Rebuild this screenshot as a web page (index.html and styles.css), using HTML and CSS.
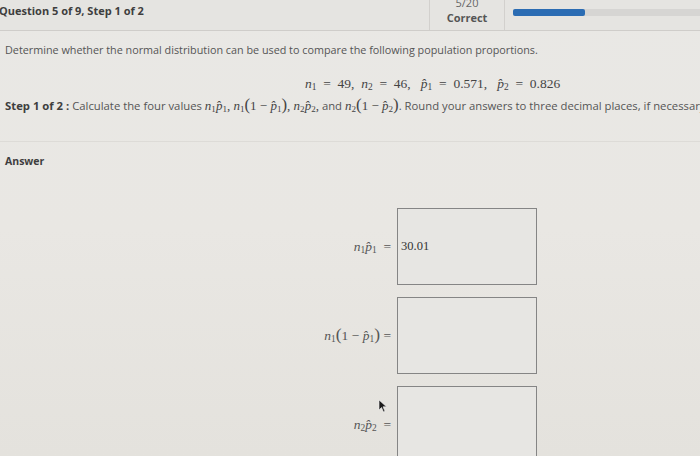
FILE: index.html
```html
<!DOCTYPE html>
<html>
<head>
<meta charset="utf-8">
<link rel="stylesheet" href="styles.css">
</head>
<body>
<div class="page">
  <header class="top">
    <div class="qtitle">Question 5 of 9, Step 1 of 2</div>
    <div class="score">
      <div class="frac">5/20</div>
      <div class="correct">Correct</div>
    </div>
    <div class="progress"><div class="fill"></div></div>
  </header>

  <section class="question">
    <p class="intro">Determine whether the normal distribution can be used to compare the following population proportions.</p>
    <p class="formula"><i>n</i><sub>1</sub> &nbsp;= &nbsp;49, &nbsp;<i>n</i><sub>2</sub> &nbsp;= &nbsp;46, &nbsp;&nbsp;<i>p̂</i><sub>1</sub> &nbsp;= &nbsp;0.571, &nbsp;&nbsp;<i>p̂</i><sub>2</sub> &nbsp;= &nbsp;0.826</p>
    <p class="step"><b>Step 1 of 2 :</b> Calculate the four values <span class="m"><i>n</i><sub>1</sub><i>p̂</i><sub>1</sub>, <i>n</i><sub>1</sub><span class="par">(</span>1 − <i>p̂</i><sub>1</sub><span class="par">)</span>, <i>n</i><sub>2</sub><i>p̂</i><sub>2</sub>,</span> and <span class="m"><i>n</i><sub>2</sub><span class="par">(</span>1 − <i>p̂</i><sub>2</sub><span class="par">)</span></span>. Round your answers to three decimal places, if necessary.</p>
  </section>

  <section class="answer">
    <div class="ans-title">Answer</div>
    <div class="grid">
      <div class="label"><span><i>n</i><sub>1</sub><i>p̂</i><sub>1</sub> &nbsp;=</span></div>
      <div class="box"><span class="val">30.01</span></div>
      <div class="label"><span><i>n</i><sub>1</sub><span class="par">(</span>1 − <i>p̂</i><sub>1</sub><span class="par">)</span> =</span></div>
      <div class="box"></div>
      <div class="label"><span><i>n</i><sub>2</sub><i>p̂</i><sub>2</sub> &nbsp;=</span></div>
      <div class="box"></div>
    </div>
  </section>

  <svg class="cursor" width="10" height="14" viewBox="0 0 10 14"><path d="M1 1 L1 11 L3.5 8.5 L5.5 13 L7 12.3 L5 7.8 L8.5 7.8 Z" fill="#1a1a1a" stroke="#f4f4f4" stroke-width="0.6"/></svg>
</div>
</body>
</html>
```

FILE: styles.css
```css
* { box-sizing: border-box; }
html, body { margin: 0; padding: 0; }
body {
  width: 700px;
  height: 456px;
  overflow: hidden;
  background: #e8e6e2;
  font-family: "Open Sans", "Liberation Sans", sans-serif;
  color: #4a4a4a;
}
.page {
  position: relative;
  width: 700px;
  height: 456px;
  overflow: hidden;
  background: linear-gradient(180deg, #e9e8e5 0%, #e9e7e3 50%, #e4e2dd 100%);
}
.top {
  display: flex;
  align-items: stretch;
  height: 31px;
  background: #e5e4e1;
  border-bottom: 1px solid #cfcdca;
}
.qtitle {
  width: 431px;
  font-size: 11px;
  font-weight: 700;
  color: #3e3e3e;
  padding-top: 3px;
  margin-left: -1px;
  border-right: 1px solid #d2d0cd;
}
.score {
  width: 75px;
  border-right: 1px solid #d2d0cd;
  text-align: center;
  font-size: 11px;
  font-weight: 700;
  color: #555;
  line-height: 14px;
}
.frac {
  margin-top: -4px;
  font-weight: 400;
  color: #666;
}
.correct { margin-top: 1px; }
.progress {
  flex: 1;
  margin: 9px 0 0 8px;
  height: 7px;
  background: #d6d5d3;
  border-radius: 2px 0 0 2px;
}
.fill {
  width: 72px;
  height: 7px;
  background: #2b6cb3;
  border-radius: 2px;
}
.question { padding: 0 0 0 5px; border-bottom: 1px solid #dddbd7; height: 111px; }
.question p { margin: 0; white-space: nowrap; }
.intro {
  font-size: 10.8px;
  color: #555;
  padding-top: 12px;
  line-height: 14px;
}
.formula {
  font-family: "Liberation Serif", serif;
  font-size: 13.5px;
  color: #444;
  padding-left: 300px;
  margin-top: 19px !important;
  line-height: 16px;
}
.formula sub, .m sub, .label sub { font-size: 0.7em; vertical-align: -2px; line-height: 0; }
.step {
  font-size: 11.3px;
  color: #555;
  margin-top: 6px !important;
  line-height: 16px;
}
.step b { color: #3e3e3e; }
.m { font-family: "Liberation Serif", serif; font-size: 13px; color: #444; }
.par { font-size: 1.3em; line-height: 0; }
.answer { padding-left: 5px; }
.ans-title {
  font-size: 10.5px;
  font-weight: 700;
  color: #3e3e3e;
  margin-top: 12px;
  line-height: 14px;
}
.grid {
  display: grid;
  grid-template-columns: 387px 140px;
  grid-auto-rows: 77px;
  row-gap: 12px;
  column-gap: 5px;
  margin-top: 40px;
}
.label {
  display: flex;
  align-items: center;
  justify-content: flex-end;
  font-family: "Liberation Serif", serif;
  font-size: 13.5px;
  color: #555;
  padding-right: 1px;
  white-space: nowrap;
}
.box {
  border: 1.5px solid #858585;
  background: #e7e6e3;
  display: flex;
  align-items: center;
  padding-left: 3px;
}
.val {
  font-family: "Liberation Serif", serif;
  font-size: 12.5px;
  color: #333;
}
.cursor {
  position: absolute;
  left: 378px;
  top: 399px;
}
```
